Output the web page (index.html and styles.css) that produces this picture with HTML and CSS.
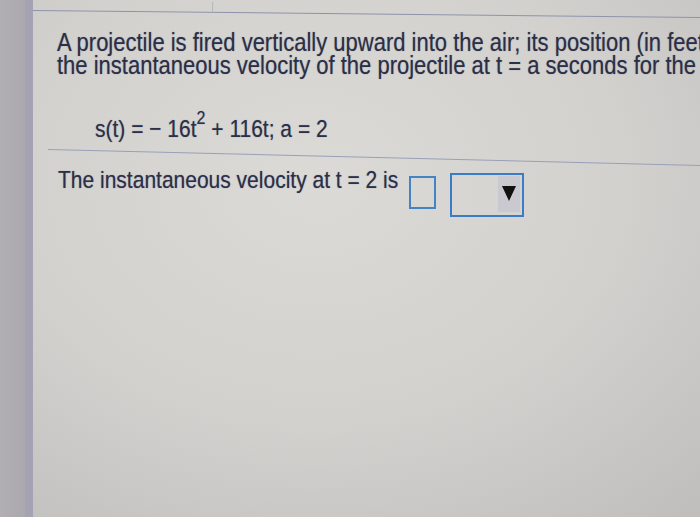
FILE: index.html
```html
<!DOCTYPE html>
<html>
<head>
<meta charset="utf-8">
<link rel="stylesheet" href="styles.css">
</head>
<body>
<div class="screen">
  <div class="sidebar"></div>
  <div class="main">
    <div class="topbar"><div class="tab"></div></div>
    <p class="question">A projectile is fired vertically upward into the air; its position (in feet)<br>the instantaneous velocity of the projectile at t = a seconds for the given</p>
    <div class="equation">s(t) = − 16t<sup class="exp">2</sup> + 116t; a = 2</div>
    <div class="rule"></div>
    <div class="answer">
      <span class="answer-text">The instantaneous velocity at t = 2 is</span>
      <span class="input-box"></span>
      <span class="select-box">
        <span class="select-btn">
          <svg class="arrow" width="14" height="15" viewBox="0 0 14 15"><polygon points="0,0 14,0 7,15" fill="#111"/></svg>
        </span>
      </span>
    </div>
  </div>
</div>
</body>
</html>
```

FILE: styles.css
```css
html, body {
  margin: 0;
  height: 100%;
}
body {
  overflow: hidden;
  font-family: "Liberation Sans", Arial, sans-serif;
  color: #2b2f48;
}
.screen {
  display: flex;
  width: 700px;
  height: 517px;
  background: radial-gradient(ellipse 80% 85% at 45% 35%, #dcdad7 0%, #d3d1ce 55%, #c1bfbd 100%);
}
.sidebar {
  flex: none;
  width: 25px;
  background: linear-gradient(90deg, #b2afb3, #aba8ae);
  border-right: 8px solid #a5a3b3;
}
.main {
  flex: 1;
  min-width: 0;
  overflow: hidden;
}
.topbar {
  height: 10px;
  border-bottom: 1px solid #8e93ab;
  transform: rotate(0.6deg);
  transform-origin: 0 100%;
}
.tab {
  margin-left: 179px;
  height: 10px;
  width: 0;
  border-left: 1px solid #b7b6bb;
}
.question {
  margin: 23px 0 0;
  padding-left: 24px;
  font-size: 22px;
  line-height: 20px;
  white-space: nowrap;
  transform: scaleY(1.18);
  transform-origin: 0 17.6px;
  text-shadow: 0 0 1px rgba(43, 47, 72, 0.45);
}
.equation {
  margin-top: 44px;
  padding-left: 62px;
  font-size: 21px;
  line-height: 23px;
  white-space: nowrap;
  transform: scaleY(1.18);
  transform-origin: 0 18.8px;
  text-shadow: 0 0 1px rgba(43, 47, 72, 0.45);
}
.exp {
  font-size: 16px;
  line-height: 0;
  vertical-align: 11px;
}
.rule {
  margin: 8px 0 0 15px;
  width: 720px;
  height: 0;
  border-top: 1px solid #98a0b9;
  transform: rotate(1.4deg);
  transform-origin: 0 0;
}
.answer {
  display: flex;
  align-items: flex-start;
  margin-top: 19px;
  padding-left: 25px;
}
.answer-text {
  font-size: 21px;
  line-height: 23px;
  white-space: nowrap;
  transform: scaleY(1.13);
  transform-origin: 0 18.8px;
  text-shadow: 0 0 1px rgba(43, 47, 72, 0.45);
}
.input-box {
  box-sizing: border-box;
  margin: 7px 0 0 11px;
  width: 27px;
  height: 33px;
  border: 2px solid #4385c3;
}
.select-box {
  box-sizing: border-box;
  display: flex;
  justify-content: flex-end;
  margin: 4px 0 0 14px;
  width: 74px;
  height: 44px;
  padding: 1px 2px 3px;
  border: 2px solid #3a7cc8;
}
.select-btn {
  display: flex;
  justify-content: center;
  padding-top: 10px;
  width: 22px;
  background: #cac9cf;
}
.arrow {
  display: block;
}
```
